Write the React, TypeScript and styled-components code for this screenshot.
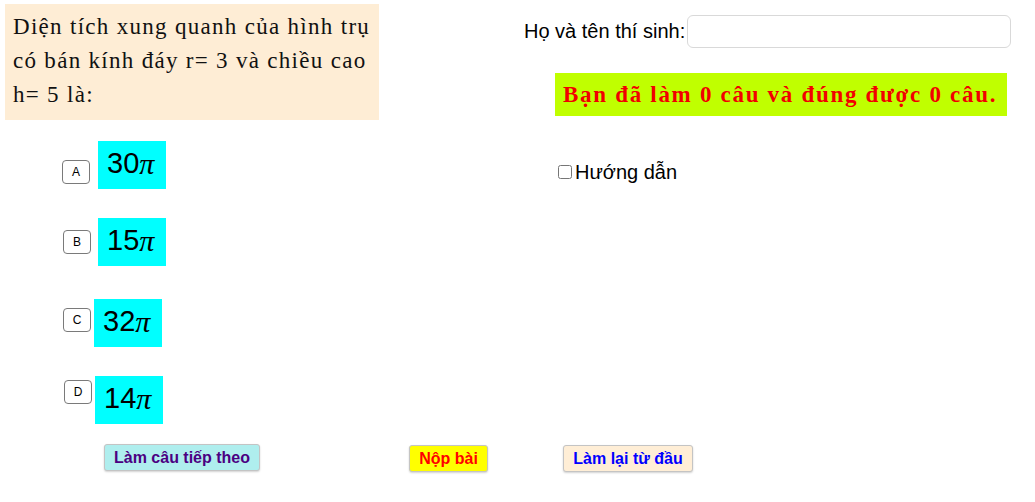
import React, { useState } from 'react'
import styled, { createGlobalStyle } from 'styled-components'

const GlobalStyle = createGlobalStyle`
  html, body {
    margin: 0;
    padding: 0;
    background: #fff;
  }
  body {
    font-family: "Liberation Sans", Arial, sans-serif;
    color: #000;
  }
`

const Page = styled.div`
  width: 1035px;
  height: 502px;
  overflow: hidden;
  background: #fff;
`

const Top = styled.div`
  display: grid;
  grid-template-columns: 524px 1fr;
`

const LeftCol = styled.div`
  display: flex;
  flex-direction: column;
`

const RightCol = styled.div`
  display: flex;
  flex-direction: column;
  align-items: flex-start;
`

const QuestionBox = styled.div`
  margin: 4px 0 0 5px;
  width: 374px;
  height: 116px;
  box-sizing: border-box;
  padding: 6px 0 0 8px;
  background: #feedd5;
  font-family: "Liberation Serif", "Times New Roman", serif;
  font-size: 23px;
  line-height: 34px;
  letter-spacing: 1.3px;
  color: #111;
  white-space: nowrap;
`

const OptionRow = styled.div<{ $top: number; $indent: number; $gap: number }>`
  display: flex;
  align-items: flex-start;
  margin-top: ${p => p.$top}px;
  padding-left: ${p => p.$indent}px;
  gap: ${p => p.$gap}px;
`

const OptionKey = styled.button<{ $drop: number }>`
  margin-top: ${p => p.$drop}px;
  width: 28px;
  height: 24px;
  padding: 0;
  background: #fff;
  border: 1.5px solid #7a7a7a;
  border-radius: 4px;
  font-family: "Liberation Sans", Arial, sans-serif;
  font-size: 12px;
  color: #000;
  cursor: pointer;
`

const AnswerBox = styled.div`
  width: 68px;
  height: 48px;
  box-sizing: border-box;
  padding: 0 0 3px 9px;
  display: flex;
  align-items: center;
  background: #00ffff;
  font-family: "Liberation Sans", Arial, sans-serif;
  font-size: 29px;
  color: #000;
`

const Pi = styled.span`
  font-family: "Liberation Serif", "Times New Roman", serif;
  font-style: italic;
  font-size: 30px;
`

const NameRow = styled.div`
  display: flex;
  align-items: center;
  margin-top: 15px;
  height: 33px;
`

const NameLabel = styled.label`
  font-size: 20px;
  color: #000;
`

const NameInput = styled.input`
  margin-left: 2px;
  width: 324px;
  height: 33px;
  box-sizing: border-box;
  border: 1px solid #d9d9d9;
  border-radius: 6px;
  padding: 0 8px;
  font-size: 16px;
  outline: none;
`

const ScoreBox = styled.div`
  margin: 25px 0 0 31px;
  width: 452px;
  height: 43px;
  box-sizing: border-box;
  padding: 0 0 0 8px;
  display: flex;
  align-items: center;
  background: #c0ff00;
  font-family: "Liberation Serif", "Times New Roman", serif;
  font-weight: bold;
  font-size: 23px;
  letter-spacing: 1.7px;
  color: #f20000;
  white-space: nowrap;
`

const HelpRow = styled.label`
  display: flex;
  align-items: center;
  margin: 45px 0 0 34px;
  height: 22px;
  font-size: 20px;
  cursor: pointer;
`

const HelpCheck = styled.input`
  margin: 0 3px 0 0;
  width: 14px;
  height: 14px;
`

const BottomRow = styled.div`
  display: flex;
  align-items: flex-start;
  margin-top: 20px;
`

const ActionButton = styled.button<{ $bg: string; $fg: string; $left: number; $w: number; $drop?: number }>`
  margin-left: ${p => p.$left}px;
  margin-top: ${p => p.$drop ?? 0}px;
  width: ${p => p.$w}px;
  height: 27px;
  padding: 0;
  background: ${p => p.$bg};
  color: ${p => p.$fg};
  border: 1px solid #c4c4c4;
  border-radius: 3px;
  box-shadow: 0 1px 2px rgba(0, 0, 0, 0.18);
  font-family: "Liberation Sans", Arial, sans-serif;
  font-weight: bold;
  font-size: 16px;
  cursor: pointer;
`

const options = [
  { key: 'A', value: '30', top: 21, indent: 62, gap: 8, drop: 19 },
  { key: 'B', value: '15', top: 29, indent: 63, gap: 7, drop: 12 },
  { key: 'C', value: '32', top: 33, indent: 63, gap: 3, drop: 9 },
  { key: 'D', value: '14', top: 29, indent: 64, gap: 3, drop: 4 },
]

export default function App() {
  const [name, setName] = useState('')
  const [help, setHelp] = useState(false)

  return (
    <Page>
      <GlobalStyle />
      <Top>
        <LeftCol>
          <QuestionBox>
            Diện tích xung quanh của hình trụ
            <br />
            có bán kính đáy r= 3 và chiều cao
            <br />
            h= 5 là:
          </QuestionBox>
          {options.map(o => (
            <OptionRow key={o.key} $top={o.top} $indent={o.indent} $gap={o.gap}>
              <OptionKey $drop={o.drop}>{o.key}</OptionKey>
              <AnswerBox>
                {o.value}
                <Pi>π</Pi>
              </AnswerBox>
            </OptionRow>
          ))}
        </LeftCol>
        <RightCol>
          <NameRow>
            <NameLabel>Họ và tên thí sinh:</NameLabel>
            <NameInput value={name} onChange={e => setName(e.target.value)} />
          </NameRow>
          <ScoreBox>Bạn đã làm 0 câu và đúng được 0 câu.</ScoreBox>
          <HelpRow>
            <HelpCheck type="checkbox" checked={help} onChange={() => setHelp(!help)} />
            Hướng dẫn
          </HelpRow>
        </RightCol>
      </Top>
      <BottomRow>
        <ActionButton $bg="#afeeee" $fg="#4b0082" $left={104} $w={156}>Làm câu tiếp theo</ActionButton>
        <ActionButton $bg="#ffff00" $fg="#ff0000" $left={149} $w={79} $drop={1}>Nộp bài</ActionButton>
        <ActionButton $bg="#ffeed6" $fg="#0000ff" $left={75} $w={130} $drop={1}>Làm lại từ đầu</ActionButton>
      </BottomRow>
    </Page>
  )
}
